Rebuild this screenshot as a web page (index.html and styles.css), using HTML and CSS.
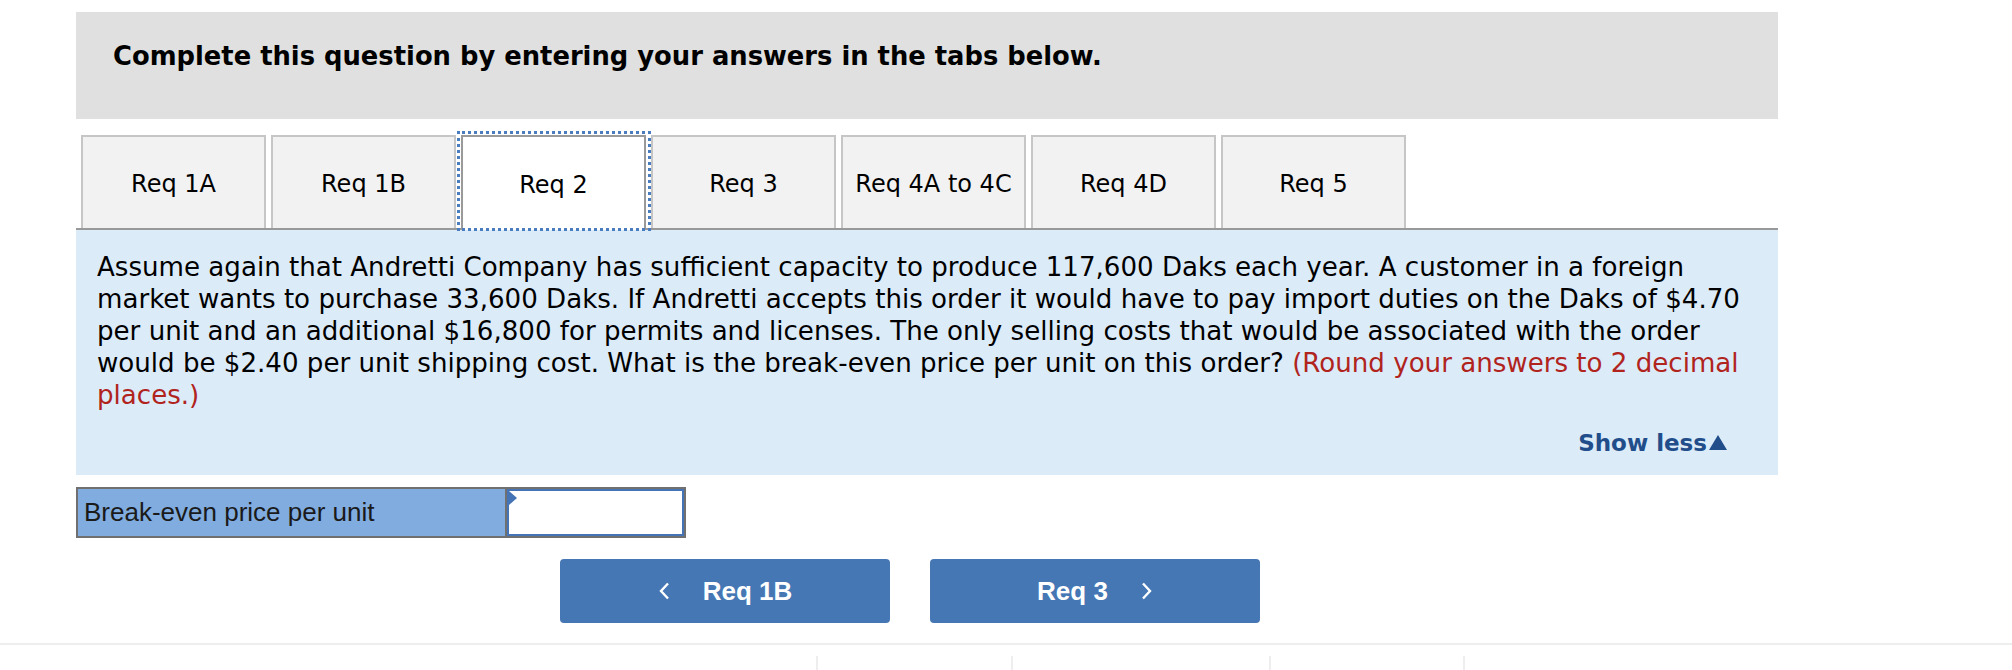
FILE: index.html
```html
<!DOCTYPE html>
<html lang="en">
<head>
<meta charset="utf-8">
<title>Req 2</title>
<link rel="stylesheet" href="styles.css">
</head>
<body>
<div class="page">
  <div class="banner">Complete this question by entering your answers in the tabs below.</div>

  <div class="tabs">
    <div class="tab">Req 1A</div>
    <div class="tab">Req 1B</div>
    <div class="tab active">Req 2</div>
    <div class="tab">Req 3</div>
    <div class="tab">Req 4A to 4C</div>
    <div class="tab">Req 4D</div>
    <div class="tab">Req 5</div>
  </div>

  <div class="panel">
    <p class="question">Assume again that Andretti Company has sufficient capacity to produce 117,600 Daks each year. A customer in a foreign market wants to purchase 33,600 Daks. If Andretti accepts this order it would have to pay import duties on the Daks of $4.70 per unit and an additional $16,800 for permits and licenses. The only selling costs that would be associated with the order would be $2.40 per unit shipping cost. What is the break-even price per unit on this order? <span class="hint">(Round your answers to 2 decimal places.)</span></p>
    <div class="toggle"><span class="toggle-text">Show less</span><svg class="toggle-arrow" width="18" height="15" viewBox="0 0 18 15"><polygon points="9,0 18,15 0,15" fill="#214e8a"/></svg></div>
  </div>

  <div class="answer">
    <div class="answer-label">Break-even price per unit</div>
    <div class="answer-input"></div>
  </div>

  <div class="nav">
    <div class="btn">
      <svg class="chev" width="12" height="18" viewBox="0 0 12 18"><polyline points="10,1.5 3,9 10,16.5" fill="none" stroke="#ffffff" stroke-width="2.4"/></svg>
      <span>Req 1B</span>
    </div>
    <div class="btn">
      <span>Req 3</span>
      <svg class="chev" width="12" height="18" viewBox="0 0 12 18"><polyline points="2,1.5 9,9 2,16.5" fill="none" stroke="#ffffff" stroke-width="2.4"/></svg>
    </div>
  </div>
</div>

<div class="footer">
  <div class="foot-cell w1"></div>
  <div class="foot-cell w2"></div>
  <div class="foot-cell w3"></div>
  <div class="foot-cell w4"></div>
</div>
</body>
</html>
```

FILE: styles.css
```css
html, body {
  margin: 0;
  padding: 0;
  background: #ffffff;
}

body {
  font-family: "DejaVu Sans", Verdana, sans-serif;
  color: #000000;
  overflow: hidden;
}

.page {
  padding: 12px 0 0 76px;
  width: 1702px;
}

.banner {
  box-sizing: border-box;
  height: 107px;
  background: #e0e0e0;
  padding: 29px 37px 0;
  font-size: 25.8px;
  font-weight: bold;
  line-height: 30px;
}

.tabs {
  display: flex;
  align-items: flex-start;
  gap: 5px;
  padding-left: 5px;
  margin-top: 16px;
  height: 93px;
}

.tab {
  box-sizing: border-box;
  width: 185px;
  height: 93px;
  background: #f2f2f2;
  border: 2px solid #c6c6c6;
  border-bottom: none;
  display: flex;
  align-items: center;
  justify-content: center;
  font-size: 24px;
  padding-top: 3px;
}

.tab.active {
  position: relative;
  z-index: 1;
  height: 95px;
  background: #ffffff;
  border-color: #9a9a9a;
}

.tab.active::after {
  content: "";
  position: absolute;
  left: -6px;
  right: -7px;
  top: -6px;
  bottom: -1px;
  border: 3px dotted #4a7cc0;
}

.panel {
  background: #dcebf8;
  border-top: 2px solid #999999;
  padding: 21px 14px 19px 21px;
}

.question {
  margin: 0;
  font-size: 26.1px;
  line-height: 32px;
}

.hint {
  color: #b0241d;
}

.toggle {
  display: flex;
  justify-content: flex-end;
  align-items: center;
  margin-top: 19px;
  padding-right: 37px;
  color: #214e8a;
  font-weight: bold;
  font-size: 23px;
  line-height: 26px;
}

.toggle-arrow {
  display: block;
  margin-left: 2px;
  margin-top: -1px;
}

.answer {
  display: flex;
  margin-top: 12px;
  width: 610px;
  height: 51px;
  box-sizing: border-box;
  border: 2px solid #707070;
}

.answer-label {
  width: 429px;
  background: #80acdf;
  border-right: 2px solid #707070;
  font-family: "Liberation Sans", Arial, sans-serif;
  font-size: 26px;
  color: #1a1a1a;
  display: flex;
  align-items: center;
  padding-left: 6px;
  box-sizing: border-box;
}

.answer-input {
  position: relative;
  flex: 1;
  background: #ffffff;
  border: 2px solid #4473b6;
}

.answer-input::before {
  content: "";
  position: absolute;
  left: 0;
  top: 0;
  border-left: 8px solid #4473b6;
  border-top: 7px solid transparent;
  border-bottom: 7px solid transparent;
}

.nav {
  display: flex;
  gap: 40px;
  margin-top: 21px;
  padding-left: 484px;
}

.btn {
  width: 330px;
  height: 64px;
  background: #4577b4;
  border-radius: 4px;
  color: #ffffff;
  display: flex;
  align-items: center;
  justify-content: center;
  gap: 33px;
  font-family: "Liberation Sans", Arial, sans-serif;
  font-weight: bold;
  font-size: 26px;
}

.chev {
  display: block;
}

.footer {
  margin-top: 20px;
  border-top: 2px solid #eeeeee;
  padding: 11px 0 0 816px;
  display: flex;
  height: 40px;
}

.foot-cell {
  border-left: 2px solid #eeeeee;
  height: 30px;
}

.w1 { width: 193px; }
.w2 { width: 256px; }
.w3 { width: 192px; }
.w4 { width: 100px; }
```
